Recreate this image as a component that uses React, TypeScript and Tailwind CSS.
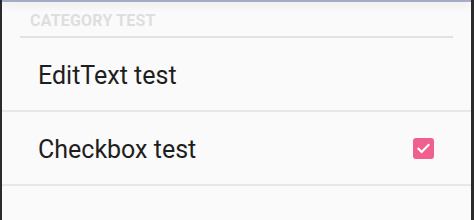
export default function App() {
  return (
    <div
      className="w-[474px] h-[220px] bg-[#2b2b2b] flex overflow-hidden"
      style={{ fontFamily: 'Roboto, "Noto Sans", sans-serif' }}
    >
      <div className="ml-[2px] mr-[3px] flex-1 bg-[#fafafa] flex flex-col relative">
        {/* top app bar edge with shadow */}
        <div className="h-[2px] bg-[#a7acc6] shadow-[0_2px_8px_rgba(0,0,0,0.18)]" />

        {/* category header */}
        <div className="px-[18px] pt-[8px]">
          <div className="pl-[10px] text-[16px] leading-[22px] font-bold tracking-[0.2px] text-[#dedede]">
            CATEGORY TEST
          </div>
          <div className="mt-[4px] h-[2px] bg-[#e2e2e2]" />
        </div>

        {/* preference rows */}
        <div className="h-[74px] flex items-center pl-[36px] pr-[38px] border-b-2 border-[#e8e8e8]">
          <span className="text-[25px] text-[#1e1e1e] leading-none pt-[2px]">EditText test</span>
        </div>
        <div className="h-[74px] flex items-center justify-between pl-[36px] pr-[37px] border-b-2 border-[#e8e8e8]">
          <span className="text-[25px] text-[#1e1e1e] leading-none pt-[2px]">Checkbox test</span>
          <div className="w-[21px] h-[21px] rounded-[3px] bg-[#f0608f] flex items-center justify-center">
            <svg width="15" height="15" viewBox="0 0 24 24" fill="none">
              <path d="M4 12.5l5 5L20 6.5" stroke="white" strokeWidth="3.4" strokeLinecap="square" />
            </svg>
          </div>
        </div>
        <div className="flex-1" />
      </div>
    </div>
  );
}
